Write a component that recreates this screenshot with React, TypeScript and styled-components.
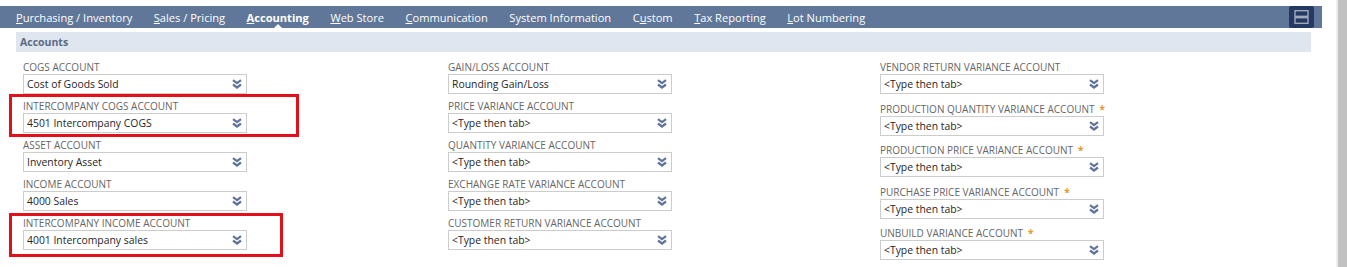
import * as React from "react";
import styled, {createGlobalStyle} from "styled-components";

const GlobalStyle = createGlobalStyle`
  html, body {
    margin: 0;
    padding: 0;
    background: #fff;
    overflow: hidden;
  }
  body {
    font-family: "Open Sans", "Liberation Sans", Arial, sans-serif;
  }
`;

const Screen = styled.div`
  display: flex;
  height: 267px;
  width: 1347px;
`;

const Main = styled.div`
  flex: 0 0 1322px;
  padding-top: 6px;
`;

const Scrollbar = styled.div`
  margin-left: auto;
  width: 9px;
  border-left: 2px solid #ececec;
  background: #c1c1c1;
`;

const TabBar = styled.nav`
  display: flex;
  align-items: center;
  height: 22px;
  background: #607799;
  padding: 0 8px 0 16px;
`;

const Tab = styled.span<{ $active?: boolean }>`
  position: relative;
  margin-right: 21.5px;
  color: #fff;
  font-size: 11.1px;
  font-weight: ${p => (p.$active ? 700 : 400)};
  white-space: nowrap;
  line-height: 23px;
  height: 22px;

  u {
    text-decoration: underline;
    text-underline-offset: 1px;
  }

  ${p =>
    p.$active &&
    `&::after {
      content: "";
      position: absolute;
      left: 50%;
      bottom: 0;
      margin-left: -4px;
      border-left: 4px solid transparent;
      border-right: 4px solid transparent;
      border-bottom: 4px solid #fff;
    }`}
`;

const MenuButton = styled.button`
  margin-left: auto;
  width: 25px;
  height: 22px;
  padding: 0;
  border: none;
  border-radius: 2px;
  background: #243a63;
  display: flex;
  align-items: center;
  justify-content: center;
`;

const SectionHeader = styled.div`
  margin: 4px 11px 0 16px;
  height: 20px;
  background: #dfe6ef;
  color: #5a6a84;
  font-size: 10.5px;
  font-weight: 700;
  line-height: 20px;
  padding-left: 4px;
`;

const Grid = styled.div`
  display: grid;
  grid-template-columns: 425px 432px 1fr;
  padding: 9px 0 0 23px;
`;

const Column = styled.div`
  display: flex;
  flex-direction: column;
  gap: 6px;
`;

const FieldWrap = styled.div`
  position: relative;
  width: 224px;
`;

const Label = styled.div<{ $required?: boolean }>`
  font-size: 10px;
  line-height: 13px;
  color: #666;
  text-transform: uppercase;
  white-space: nowrap;
  padding-top: ${p => (p.$required ? "2.5px" : "0")};
`;

const Star = styled.span`
  color: #e49a2a;
  margin-left: 5px;
  font-weight: 700;
`;

const SelectBox = styled.div`
  box-sizing: border-box;
  height: 20px;
  border: 1px solid #cccccc;
  background: #fff;
  display: flex;
  align-items: center;
  padding: 0 4px 0 3px;
  font-size: 10.4px;
  color: #262626;
`;

const Value = styled.span`
  flex: 1;
  white-space: nowrap;
`;

const Highlight = styled.div<{ $t: number; $r: number; $b: number; $l: number }>`
  position: absolute;
  top: ${p => p.$t}px;
  right: ${p => p.$r}px;
  bottom: ${p => p.$b}px;
  left: ${p => p.$l}px;
  border: 3px solid #e3101b;
  pointer-events: none;
`;

const Chevrons = () => (
  <svg width="10" height="10" viewBox="0 0 10 10">
    <path d="M1 1.2 L5 4.2 L9 1.2 M1 5.5 L5 8.5 L9 5.5" fill="none" stroke="#60749a" strokeWidth="2.2" />
  </svg>
);

type Box = { t: number; r: number; b: number; l: number };

type FieldProps = {
  label: string;
  value: string;
  required?: boolean;
  box?: Box;
};

const Field = ({label, value, required, box}: FieldProps) => (
  <FieldWrap>
    <Label $required={required}>
      {label}
      {required && <Star>*</Star>}
    </Label>
    <SelectBox>
      <Value>{value}</Value>
      <Chevrons />
    </SelectBox>
    {box && <Highlight $t={box.t} $r={box.r} $b={box.b} $l={box.l} />}
  </FieldWrap>
);

const TYPE = "<Type then tab>";

const tabs: { pre: string; key: string; post: string; active?: boolean }[] = [
  {pre: "", key: "P", post: "urchasing / Inventory"},
  {pre: "", key: "S", post: "ales / Pricing"},
  {pre: "", key: "A", post: "ccounting", active: true},
  {pre: "", key: "W", post: "eb Store"},
  {pre: "", key: "C", post: "ommunication"},
  {pre: "System Information", key: "", post: ""},
  {pre: "C", key: "u", post: "stom"},
  {pre: "", key: "T", post: "ax Reporting"},
  {pre: "", key: "L", post: "ot Numbering"},
];

const columns: FieldProps[][] = [
  [
    {label: "COGS Account", value: "Cost of Goods Sold"},
    {label: "Intercompany COGS Account", value: "4501 Intercompany COGS", box: {t: -6, r: -52, b: -4, l: -14}},
    {label: "Asset Account", value: "Inventory Asset"},
    {label: "Income Account", value: "4000 Sales"},
    {label: "Intercompany Income Account", value: "4001 Intercompany sales", box: {t: -4, r: -36, b: -7, l: -14}},
  ],
  [
    {label: "Gain/Loss Account", value: "Rounding Gain/Loss"},
    {label: "Price Variance Account", value: TYPE},
    {label: "Quantity Variance Account", value: TYPE},
    {label: "Exchange Rate Variance Account", value: TYPE},
    {label: "Customer Return Variance Account", value: TYPE},
  ],
  [
    {label: "Vendor Return Variance Account", value: TYPE},
    {label: "Production Quantity Variance Account", value: TYPE, required: true},
    {label: "Production Price Variance Account", value: TYPE, required: true},
    {label: "Purchase Price Variance Account", value: TYPE, required: true},
    {label: "Unbuild Variance Account", value: TYPE, required: true},
  ],
];

export default function App() {
  return (
    <Screen>
      <GlobalStyle />
      <Main>
        <TabBar>
          {tabs.map((t, i) => (
            <Tab key={i} $active={t.active}>
              {t.pre}
              {t.key && <u>{t.key}</u>}
              {t.post}
            </Tab>
          ))}
          <MenuButton aria-label="menu">
            <svg width="15" height="14" viewBox="0 0 15 14">
              <rect x="1" y="0.7" width="13" height="5.6" fill="none" stroke="#a9b1c0" strokeWidth="1.3" />
              <rect x="1" y="7.7" width="13" height="5.6" fill="none" stroke="#a9b1c0" strokeWidth="1.3" />
            </svg>
          </MenuButton>
        </TabBar>
        <SectionHeader>Accounts</SectionHeader>
        <Grid>
          {columns.map((col, ci) => (
            <Column key={ci}>
              {col.map((f, fi) => (
                <Field key={fi} {...f} />
              ))}
            </Column>
          ))}
        </Grid>
      </Main>
      <Scrollbar />
    </Screen>
  );
}
